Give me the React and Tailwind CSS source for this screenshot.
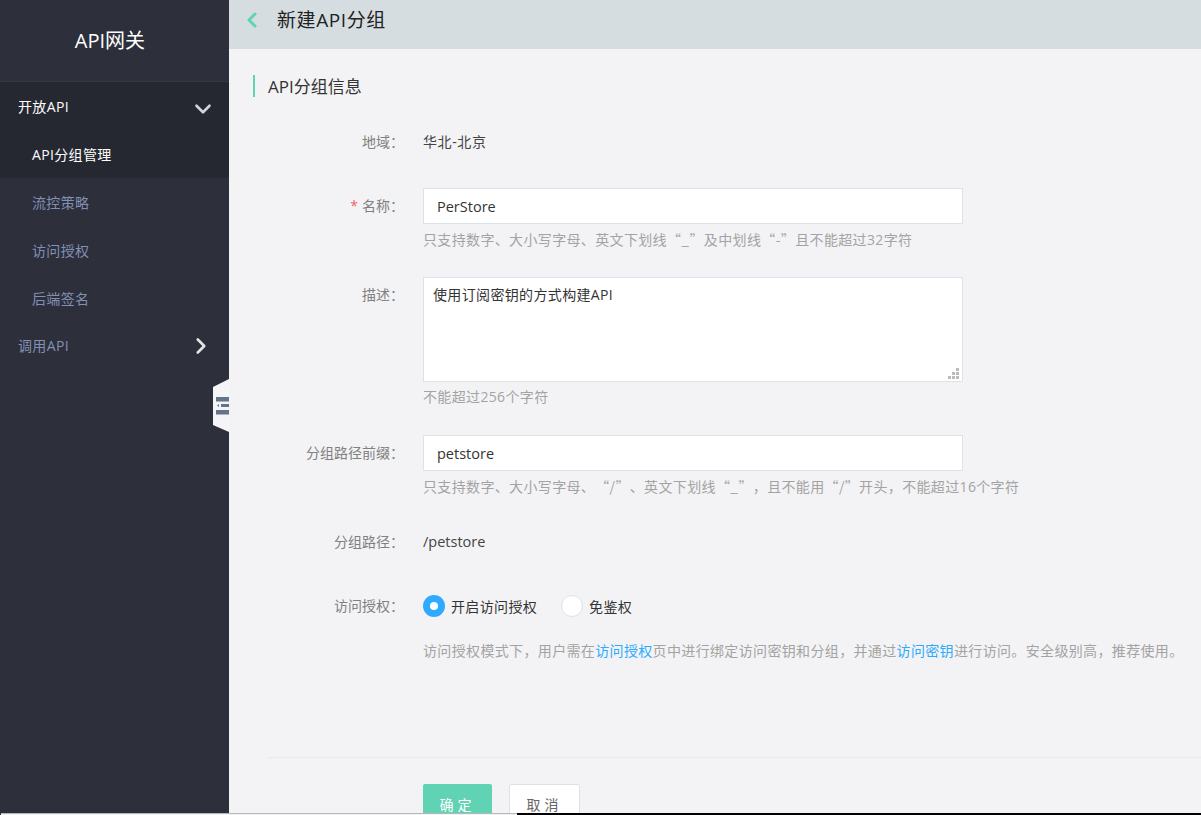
import React from "react";
import { ChevronDown, ChevronLeft, ChevronRight } from "lucide-react";

const font = "font-['Open_Sans','Noto_Sans_CJK_SC',sans-serif]";

function Field({ label, required, hint, className, children }) {
  return (
    <div className={`flex ${className}`}>
      <div className="w-[175px] shrink-0 text-right text-[14px] leading-[36px] tracking-normal text-[#808080]">
        {required && <span className="mr-1 text-[#f0645f]">*</span>}
        {label}
      </div>
      <div className="ml-[19px] min-w-0 flex-1">
        {children}
        {hint && <p className="mt-[6px] h-[18px] whitespace-nowrap text-[14px] leading-[18px] text-[#a3a3a3] [text-spacing-trim:space-all]">{hint}</p>}
      </div>
    </div>
  );
}

// curly quotes are full width in the CJK font, Open Sans would squeeze them
function Q({ children }) {
  return <span className="font-['Noto_Sans_CJK_SC',sans-serif]">“{children}”</span>;
}

function TextBox({ value }) {
  return (
    <div className="h-[36px] w-[540px] border border-[#dbe2e8] bg-white px-[13px] text-[14.5px] leading-[35px] tracking-normal text-[#333]">
      {value}
    </div>
  );
}

function Radio({ checked, label }) {
  return (
    <div className="flex items-center gap-[6px] text-[14px] text-[#333]">
      {checked ? (
        <span className="flex size-[22px] items-center justify-center rounded-full bg-[#2eabff]">
          <span className="size-[8px] rounded-full bg-white" />
        </span>
      ) : (
        <span className="size-[22px] rounded-full border border-[#dbe2e8] bg-white" />
      )}
      {label}
    </div>
  );
}

export default function App() {
  const subItems = ["流控策略", "访问授权", "后端签名"];

  return (
    <div className={`relative flex h-[815px] w-[1201px] overflow-hidden bg-[#f3f3f5] tracking-[0.35px] ${font}`}>
      <aside className="relative w-[229px] shrink-0 bg-[#2d2f3b]">
        <div className="h-[82px] border-b border-[#363844] pr-[9px] text-center text-[20px] leading-[81px] tracking-normal text-white">API网关</div>
        <div className="bg-[#262831]">
          <div className="flex h-[48px] items-center justify-between pl-[18px] pr-[13px] text-[14px] text-white">
            开放API
            <ChevronDown size={26} strokeWidth={2.4} className="mt-[6px] text-[#d4d4d8]" />
          </div>
          <div className="flex h-[48px] items-center pl-[32px] text-[14px] text-white">API分组管理</div>
        </div>
        {subItems.map((item) => (
          <div key={item} className="flex h-[48px] items-center pl-[32px] text-[14px] text-[#8290b3]">
            {item}
          </div>
        ))}
        <div className="flex h-[48px] items-center justify-between pb-[1px] pl-[18px] pr-[15px] text-[14px] text-[#8290b3]">
          调用API
          <ChevronRight size={26} strokeWidth={2.4} className="text-[#e4e4e7]" />
        </div>
        <div className="absolute left-[213px] top-[379px] flex h-[53px] w-[16px] items-center justify-end bg-[#f5f5f7] [clip-path:polygon(0_15%,100%_0,100%_100%,0_87%)]">
          <svg width="13" height="18" viewBox="0 0 13 18" fill="#64748b">
            <rect x="0" y="0" width="13" height="4.5" />
            <polygon points="1,8.5 3,7 3,10" />
            <rect x="5" y="7" width="8" height="3" />
            <rect x="0" y="13" width="13" height="4.5" />
          </svg>
        </div>
      </aside>

      <main className="min-w-0 flex-1">
        <header className="flex h-[49px] items-center bg-[#d5dde0] pb-[9px]">
          <ChevronLeft size={24} strokeWidth={3} className="ml-[11px] text-[#5fd3b4]" />
          <h1 className="ml-[13px] text-[19px] tracking-[0.6px] text-[#222]">新建API分组</h1>
        </header>

        <div className="ml-[24px] mt-[26px] h-[22px] border-l-2 border-[#5fd3b4] pl-[13px] text-[17px] leading-[23px] tracking-normal text-[#333]">
          API分组信息
        </div>

        <Field label="地域：" className="mt-[27px]">
          <span className="text-[14px] leading-[36px] tracking-[0.6px] text-[#444]">华北-北京</span>
        </Field>

        <Field
          label="名称："
          required
          className="mt-[28px]"
          hint={<>只支持数字、大小写字母、英文下划线<Q>_</Q>及中划线<Q>-</Q>且不能超过32字符</>}
        >
          <TextBox value="PerStore" />
        </Field>

        <Field label="描述：" className="mt-[29px]" hint="不能超过256个字符">
          <div className="relative h-[105px] w-[540px] border border-[#dbe2e8] bg-white px-[9px] py-[7px] text-[14px] leading-[20px] text-[#333]">
            使用订阅密钥的方式构建API
            <svg className="absolute bottom-[2px] right-[3px]" width="11" height="11" viewBox="0 0 11 11" fill="#bbbbbb">
              <rect x="8" y="0" width="3" height="3" />
              <rect x="4" y="4" width="3" height="3" />
              <rect x="8" y="4" width="3" height="3" />
              <rect x="0" y="8" width="3" height="3" />
              <rect x="4" y="8" width="3" height="3" />
              <rect x="8" y="8" width="3" height="3" />
            </svg>
          </div>
        </Field>

        <Field
          label="分组路径前缀："
          className="mt-[29px]"
          hint={<>只支持数字、大小写字母、<Q>/</Q>、英文下划线<Q>_</Q>，且不能用<Q>/</Q>开头，不能超过16个字符</>}
        >
          <TextBox value="petstore" />
        </Field>

        <Field label="分组路径：" className="mt-[29px]">
          <span className="text-[14.5px] leading-[36px] tracking-normal text-[#444]">/petstore</span>
        </Field>

        <Field label="访问授权：" className="mt-[28px]">
          <div className="flex h-[36px] items-center gap-[24px]">
            <Radio checked label="开启访问授权" />
            <Radio label="免鉴权" />
          </div>
        </Field>

        <p className="ml-[194px] mt-[18px] whitespace-nowrap text-[14px] leading-[18px] text-[#a3a3a3]">
          访问授权模式下，用户需在<span className="text-[#2eabff]">访问授权</span>页中进行绑定访问密钥和分组，并通过<span className="text-[#2eabff]">访问密钥</span>进行访问。安全级别高，推荐使用。
        </p>

        <div className="ml-[38px] mt-[97px] border-t border-[#eaeaec]" />

        <div className="ml-[194px] mt-[26px] flex gap-[17px]">
          <button className="h-[40px] w-[69px] rounded-[2px] bg-[#5fd3b4] text-[14px] tracking-[4px] text-white">确定</button>
          <button className="h-[40px] w-[71px] rounded-[2px] border border-[#dbe2e8] bg-white text-[14px] tracking-[4px] text-[#666]">取消</button>
        </div>
      </main>

      <div className="absolute bottom-0 left-0 flex h-[2px] w-full">
        <div className="ml-px w-[516px] border-t border-[#b8b8b8] bg-[#f2f2f4]" />
        <div className="flex-1 bg-black" />
      </div>
    </div>
  );
}
